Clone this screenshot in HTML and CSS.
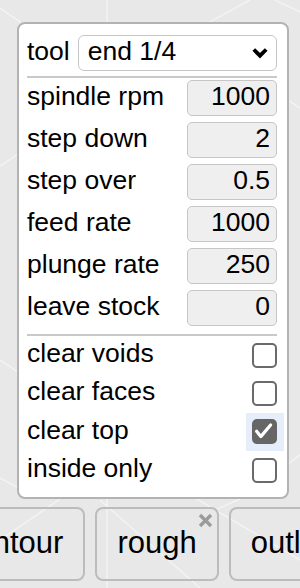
FILE: index.html
```html
<!DOCTYPE html>
<html>
<head>
<meta charset="utf-8">
<link rel="stylesheet" href="styles.css">
</head>
<body>
<svg class="grid" width="300" height="588" viewBox="0 0 300 588">
  <g stroke="#f5f5f5" stroke-width="1.2" fill="none">
    <line x1="107" y1="0" x2="107" y2="588"/>
    <line x1="0" y1="8" x2="40" y2="36"/>
    <line x1="195" y1="30" x2="250" y2="0"/>
    <line x1="275" y1="0" x2="300" y2="12"/>
    <line x1="280" y1="95" x2="300" y2="108"/>
    <line x1="0" y1="166" x2="30" y2="146"/>
    <line x1="0" y1="360" x2="30" y2="380"/>
    <line x1="280" y1="470" x2="300" y2="455"/>
    <line x1="0" y1="478" x2="30" y2="494"/>
    <line x1="60" y1="499" x2="0" y2="540"/>
    <line x1="190" y1="495" x2="300" y2="560"/>
    <line x1="215" y1="510" x2="260" y2="490"/>
    <line x1="100" y1="500" x2="200" y2="588"/>
  </g>
</svg>
<div class="panel">
  <div class="tool-row">
    <span class="lbl">tool</span>
    <div class="select">
      <span>end 1/4</span>
      <svg class="chev" width="16" height="12" viewBox="0 0 16 12"><polyline points="1.8,2.5 8,8.7 14.2,2.5" fill="none" stroke="#000" stroke-width="3.8"/></svg>
    </div>
  </div>
  <div class="sep"></div>
  <div class="fields">
    <div class="field"><span class="lbl">spindle rpm</span><span class="input">1000</span></div>
    <div class="field"><span class="lbl">step down</span><span class="input">2</span></div>
    <div class="field"><span class="lbl">step over</span><span class="input">0.5</span></div>
    <div class="field"><span class="lbl">feed rate</span><span class="input">1000</span></div>
    <div class="field"><span class="lbl">plunge rate</span><span class="input">250</span></div>
    <div class="field"><span class="lbl">leave stock</span><span class="input">0</span></div>
  </div>
  <div class="sep sep2"></div>
  <div class="checks">
    <div class="check"><span class="lbl">clear voids</span><span class="cbwrap"><span class="cb"></span></span></div>
    <div class="check"><span class="lbl">clear faces</span><span class="cbwrap"><span class="cb"></span></span></div>
    <div class="check"><span class="lbl">clear top</span><span class="cbwrap focus"><span class="cb on"><svg width="21" height="21" viewBox="0 0 21 21"><polyline points="2.6,10.2 6.8,15.6 16.6,4" fill="none" stroke="#fff" stroke-width="3.2" stroke-linecap="round" stroke-linejoin="round"/></svg></span></span></div>
    <div class="check"><span class="lbl">inside only</span><span class="cbwrap"><span class="cb"></span></span></div>
  </div>
</div>
<div class="tabs">
  <div class="tab">contour</div>
  <div class="tab">rough<svg class="close" width="15" height="15" viewBox="0 0 15 15"><g stroke="#9b9b9b" stroke-width="3.4"><line x1="2" y1="2" x2="13" y2="13"/><line x1="13" y1="2" x2="2" y2="13"/></g></svg></div>
  <div class="tab">outline</div>
</div>
</body>
</html>
```
FILE: styles.css
```css
html, body {
  margin: 0;
  padding: 0;
}
body {
  position: relative;
  width: 300px;
  height: 588px;
  overflow: hidden;
  background: #e8e8e8;
  font-family: "Liberation Sans", Arial, Helvetica, sans-serif;
  color: #000;
}
.grid {
  position: absolute;
  left: 0;
  top: 0;
}
.panel {
  position: relative;
  box-sizing: border-box;
  width: 272px;
  margin: 22px 0 0 17px;
  border: 2px solid #b3b3b3;
  border-radius: 8px;
  background: #fff;
  padding: 11px 10px 8px 8px;
  font-size: 26.5px;
}
.tool-row {
  display: flex;
  align-items: center;
  gap: 8px;
  height: 36px;
}
.lbl {
  white-space: nowrap;
  padding-bottom: 3px;
}
.select {
  flex: 1;
  box-sizing: border-box;
  height: 36px;
  border: 1px solid #c6c6c6;
  border-radius: 6px;
  background: #fff;
  display: flex;
  align-items: center;
  justify-content: space-between;
  padding: 0 8px 3px 9px;
}
.chev {
  margin-top: 3px;
}
.sep {
  height: 2px;
  background: #c9c9c9;
  margin: 5px 0 2px 0;
}
.sep2 {
  margin: 8px 0 0 0;
}
.fields {
  display: flex;
  flex-direction: column;
  gap: 6px;
}
.field {
  display: flex;
  align-items: center;
  justify-content: space-between;
  height: 36px;
}
.input {
  box-sizing: border-box;
  width: 90px;
  height: 36px;
  background: #efefef;
  border: 1px solid #c6c6c6;
  border-radius: 5px;
  display: flex;
  align-items: center;
  justify-content: flex-end;
  padding: 0 6px 3px 0;
}
.check {
  display: flex;
  align-items: center;
  justify-content: space-between;
  height: 38.33px;
}
.cbwrap {
  width: 38.33px;
  height: 38.33px;
  margin-right: -7px;
  display: flex;
  align-items: center;
  justify-content: center;
}
.cbwrap.focus {
  background: #e6eefc;
}
.cb {
  box-sizing: border-box;
  width: 25px;
  height: 25px;
  border: 2px solid #6a6a6a;
  border-radius: 5px;
  background: #fff;
  display: flex;
  align-items: center;
  justify-content: center;
}
.cb.on {
  background: #666;
  border-color: #666;
}
.tabs {
  position: relative;
  display: flex;
  gap: 10px;
  margin: 8px 0 0 -62px;
}
.tab {
  position: relative;
  flex: none;
  box-sizing: border-box;
  height: 74px;
  border: 2px solid #bcbcbc;
  border-radius: 8px;
  padding: 0 20px 3px 20px;
  display: flex;
  align-items: center;
  font-size: 31px;
  white-space: nowrap;
}
.close {
  position: absolute;
  top: 4px;
  right: 4px;
}
```
